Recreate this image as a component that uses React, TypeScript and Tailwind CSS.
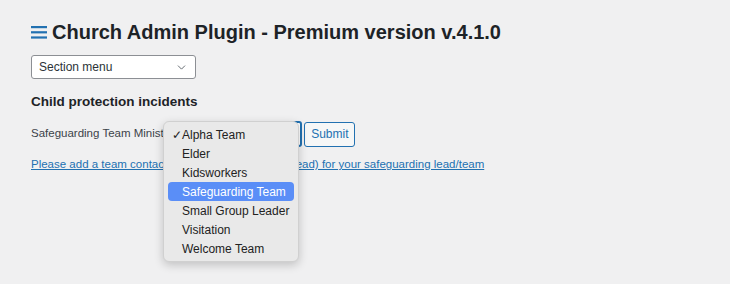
import { ChevronDown } from "lucide-react";

const teams = [
  "Alpha Team",
  "Elder",
  "Kidsworkers",
  "Safeguarding Team",
  "Small Group Leader",
  "Visitation",
  "Welcome Team",
];

const font = "font-['Helvetica','Liberation_Sans',Arial,sans-serif]";

export default function App() {
  return (
    <div className={`relative min-h-[284px] bg-[#f0f0f1] pl-[31px] pt-[20px] text-[#1d2327] ${font}`}>
      <h1 className="flex items-center gap-[5px] text-[20px] font-bold leading-[24px] text-[#1d2327]">
        <svg width="16" height="13" viewBox="0 0 16 13" className="mt-[1px]">
          <rect x="0" y="0" width="16" height="2.2" fill="#2271b1" />
          <rect x="0" y="5.2" width="16" height="2.2" fill="#2271b1" />
          <rect x="0" y="10.4" width="16" height="2.2" fill="#2271b1" />
        </svg>
        Church Admin Plugin - Premium version v.4.1.0
      </h1>

      <div className="mt-[11px] flex h-[24px] w-[165px] items-center justify-between rounded-[3px] border border-[#8c8f94] bg-white pl-[7px] pr-[7px] text-[12px] text-[#2c3338]">
        <span>Section menu</span>
        <ChevronDown size={13} strokeWidth={1.6} className="text-[#50575e]" />
      </div>

      <h2 className="mt-[13px] text-[13.5px] font-bold leading-[20px] text-[#1d2327]">
        Child protection incidents
      </h2>

      <div className="mt-[9px] flex items-center text-[11.5px] text-[#3c434a]">
        <span className="whitespace-nowrap">Safeguarding Team Ministry</span>
        <div className="ml-[4px] h-[26px] w-[125px] rounded-[3px] border-2 border-[#2271b1] bg-white" />
        <button className="ml-[2px] h-[25px] w-[51px] rounded-[3px] border border-[#2271b1] bg-[#f6f7f7] text-[12px] text-[#2271b1]">
          Submit
        </button>
      </div>

      <p className="mt-[9px] whitespace-nowrap text-[11.5px] text-[#2271b1] underline">
        Please add a team contact type (e.g. Safeguarding lead) for your safeguarding lead/team
      </p>

      <div className="absolute left-[163px] top-[121px] w-[136px] rounded-[6px] border border-[#d0d0d0] bg-[#e9e9e9] px-[4px] py-[3px] shadow-[0_3px_10px_rgba(0,0,0,0.2)]">
        {teams.map((t, i) => (
          <div
            key={t}
            className={`relative flex h-[19px] items-center whitespace-nowrap rounded-[4px] pl-[14px] text-[12px] ${
              t === "Safeguarding Team" ? "bg-[#5a8ef7] text-white" : "text-[#222]"
            }`}
          >
            {i === 0 && <span className="absolute left-[4px] text-[12px]">✓</span>}
            {t}
          </div>
        ))}
      </div>
    </div>
  );
}
